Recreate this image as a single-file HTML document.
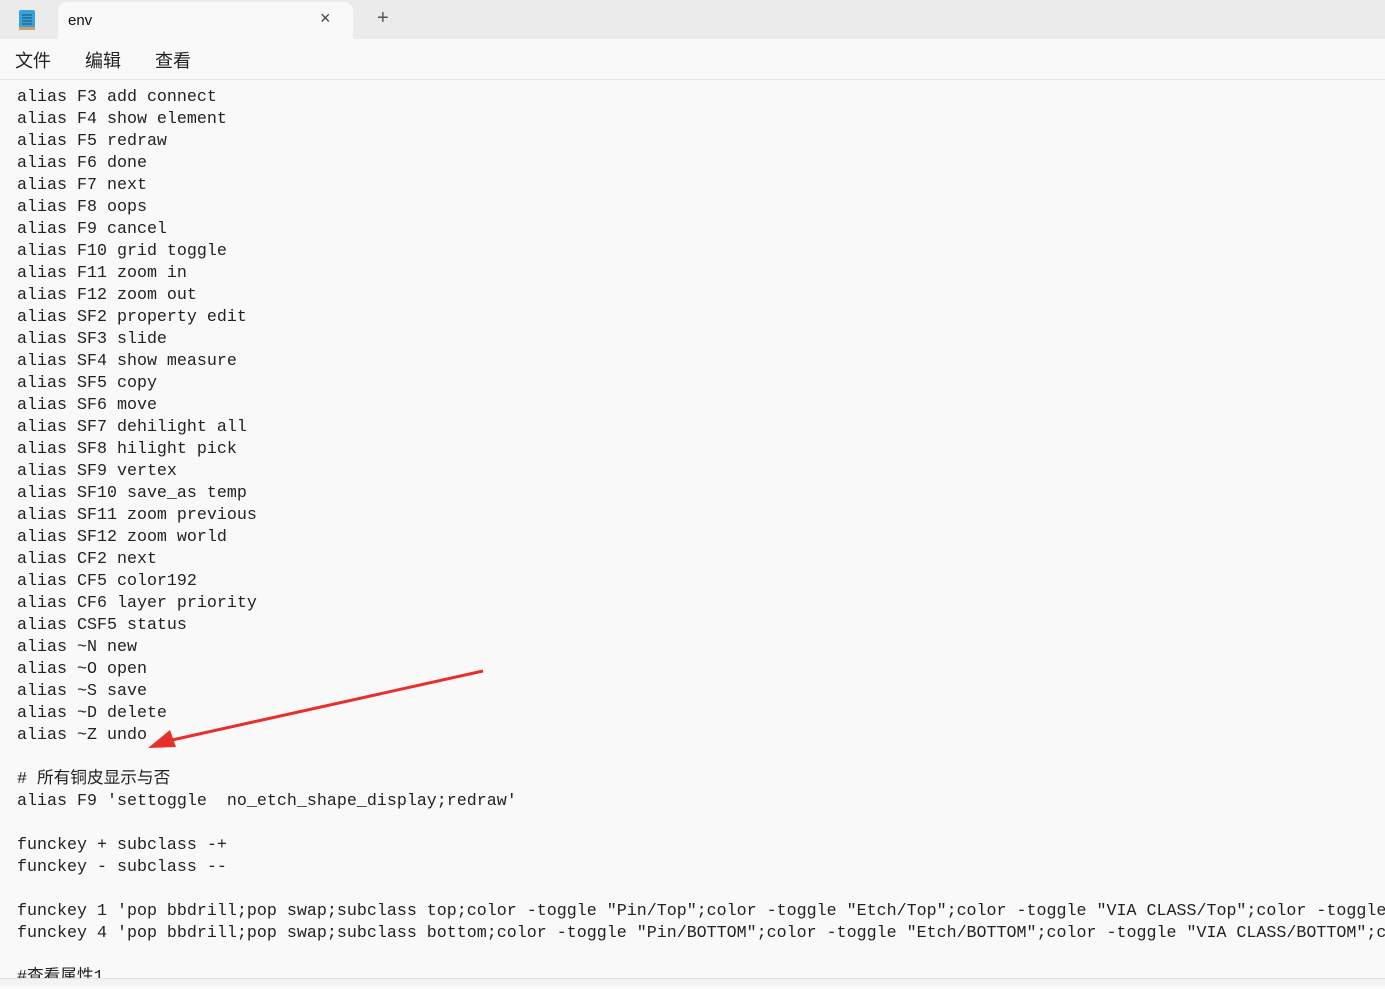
<!DOCTYPE html>
<html><head><meta charset="utf-8"><style>
body{margin:0;width:1385px;height:984px;overflow:hidden;background:#f9f9f9;position:relative;font-family:"Liberation Sans","Noto Sans CJK SC",sans-serif}
.tabs{position:absolute;left:0;top:0;width:1385px;height:39px;background:#ebebeb}
.tab{position:absolute;left:58px;top:2px;width:295px;height:37px;background:#f9f9f9;border-radius:8px 8px 0 0}
.menu{position:absolute;top:39px;left:0;width:1385px;height:40px;border-bottom:1px solid #e5e5e5;font-size:18px;color:#222}
.menu span{position:absolute;top:8px}
pre{position:absolute;left:17px;top:87px;margin:0;font-family:"Liberation Mono","Noto Sans CJK SC",monospace;font-size:16.67px;line-height:22px;color:#222;white-space:pre}
.bot{position:absolute;left:0;top:978px;width:1385px;height:6px;background:#f3f3f3;border-top:1px solid #e0e0e0}
</style></head><body>
<div class="tabs">
<svg style="position:absolute;left:18px;top:8px" width="18" height="22"><rect x="1" y="2" width="16" height="19" rx="2" fill="#3aa0d8"/><rect x="1" y="19" width="16" height="3" fill="#c9a36a"/><g stroke="#1b5f8a" stroke-width="1.2"><line x1="4" y1="7" x2="14" y2="7"/><line x1="4" y1="10" x2="14" y2="10"/><line x1="4" y1="13" x2="14" y2="13"/><line x1="4" y1="16" x2="14" y2="16"/></g></svg>
<div class="tab"></div>
<span style="position:absolute;left:68px;top:12px;font-size:15px;color:#111">env</span>
<span style="position:absolute;left:320px;top:8px;font-size:18px;color:#444">×</span>
<span style="position:absolute;left:377px;top:7px;font-size:20px;color:#555">+</span>
</div>
<div class="menu"><span style="left:15px">文件</span><span style="left:85px">编辑</span><span style="left:155px">查看</span></div>
<pre>alias F3 add connect
alias F4 show element
alias F5 redraw
alias F6 done
alias F7 next
alias F8 oops
alias F9 cancel
alias F10 grid toggle
alias F11 zoom in
alias F12 zoom out
alias SF2 property edit
alias SF3 slide
alias SF4 show measure
alias SF5 copy
alias SF6 move
alias SF7 dehilight all
alias SF8 hilight pick
alias SF9 vertex
alias SF10 save_as temp
alias SF11 zoom previous
alias SF12 zoom world
alias CF2 next
alias CF5 color192
alias CF6 layer priority
alias CSF5 status
alias ~N new
alias ~O open
alias ~S save
alias ~D delete
alias ~Z undo

# 所有铜皮显示与否
alias F9 'settoggle  no_etch_shape_display;redraw'

funckey + subclass -+
funckey - subclass --

funckey 1 'pop bbdrill;pop swap;subclass top;color -toggle "Pin/Top";color -toggle "Etch/Top";color -toggle "VIA CLASS/Top";color -toggle
funckey 4 'pop bbdrill;pop swap;subclass bottom;color -toggle "Pin/BOTTOM";color -toggle "Etch/BOTTOM";color -toggle "VIA CLASS/BOTTOM";c

#查看属性1</pre>
<svg style="position:absolute;left:0;top:0" width="1385" height="984"><path d="M483 671 L172 740" stroke="#e8302a" stroke-width="3" fill="none"/><path d="M148 748 L170 730 L176 747 Z" fill="#e8302a"/></svg>
<div class="bot"></div>
</body></html>
